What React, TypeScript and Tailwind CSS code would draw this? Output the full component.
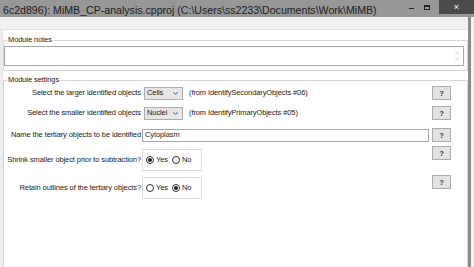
import { ChevronDown, ChevronUp } from "lucide-react";

function HelpButton() {
  return (
    <div className="w-[19px] h-[14px] bg-[#e3e3e3] border border-[#acacac] flex items-center justify-center text-[7px] font-bold text-[#333] leading-none">
      ?
    </div>
  );
}

function Select({ value }: { value: string }) {
  return (
    <div className="w-[39px] h-[13px] bg-[#e6e6e6] border border-[#adadad] flex items-center justify-between pl-[2px] pr-[3px]">
      <span>{value}</span>
      <ChevronDown size={7} strokeWidth={3} className="text-[#333]" />
    </div>
  );
}

function Radio({ checked }: { checked: boolean }) {
  return (
    <span className="w-[8px] h-[8px] rounded-full border border-[#333] bg-white flex items-center justify-center">
      {checked && <span className="w-[4px] h-[4px] rounded-full bg-[#222]" />}
    </span>
  );
}

function YesNo({ yes }: { yes: boolean }) {
  return (
    <div className="w-[60px] h-[22px] border border-[#dcdcdc] bg-white flex items-center gap-[4px] pl-[3px]">
      <span className="flex items-center gap-[2px]">
        <Radio checked={yes} />
        Yes
      </span>
      <span className="flex items-center gap-[2px]">
        <Radio checked={!yes} />
        No
      </span>
    </div>
  );
}

export default function App() {
  return (
    <div className="w-[474px] h-[267px] overflow-hidden bg-white flex flex-col font-['Liberation_Sans',Arial,sans-serif] text-[#1a1a1a]">
      {/* Title bar */}
      <div className="h-[20px] bg-[#979797] flex items-start">
        <div className="pl-[3px] pt-[3px] text-[10.6px] leading-[14px] text-[#1e1e1e] whitespace-nowrap">
          6c2d896): MiMB_CP-analysis.cpproj (C:\Users\ss2233\Documents\Work\MiMB)
        </div>
        <div className="ml-auto flex items-start">
          <div className="w-[16px] h-[14px] flex items-center justify-center">
            <div className="w-[5px] h-[1px] bg-[#222] mt-[3px]" />
          </div>
          <div className="w-[16px] h-[14px] flex items-center justify-center">
            <div className="w-[6px] h-[5px] border border-[#222] border-t-2" />
          </div>
          <div className="w-[35px] h-[14px] bg-[#4a4a4a] ml-[4px] flex items-center justify-center text-white text-[9px] leading-none">
            ×
          </div>
        </div>
      </div>

      <div className="flex-1 flex">
        <div className="w-[468px] flex flex-col">
          <div className="h-[13px] bg-[#f1f1f1] border-b border-[#e2e2e2]" />

          <div className="flex-1 border-l-[3px] border-[#ececec] text-[7.5px] leading-[10px] tracking-[-0.1px]">
            {/* Module notes */}
            <fieldset className="mt-[5px] border border-[#d7d7d7] pb-[4px]">
              <legend className="ml-[3px] px-[1px] leading-[10px]">Module notes</legend>
              <div className="mt-[1px] h-[20px] border border-[#a8a8a8] bg-white flex justify-end mr-[3px]">
                <div className="flex flex-col items-center justify-center pr-[3px] text-[#9a9a9a]">
                  <ChevronUp size={6} strokeWidth={2} />
                  <ChevronDown size={6} strokeWidth={2} />
                </div>
              </div>
            </fieldset>

            {/* Module settings */}
            <fieldset className="mt-[4px] border border-[#d7d7d7] h-[200px] pr-[16px]">
              <legend className="ml-[3px] px-[1px] leading-[10px]">Module settings</legend>

              <div className="mt-[1px] flex items-center h-[14px]">
                <div className="w-[137px] text-right whitespace-nowrap">Select the larger identified objects</div>
                <div className="ml-[3px]">
                  <Select value="Cells" />
                </div>
                <div className="ml-[6px]">(from IdentifySecondaryObjects #06)</div>
                <div className="ml-auto">
                  <HelpButton />
                </div>
              </div>

              <div className="mt-[6px] flex items-center h-[14px]">
                <div className="w-[137px] text-right whitespace-nowrap">Select the smaller identified objects</div>
                <div className="ml-[3px]">
                  <Select value="Nuclei" />
                </div>
                <div className="ml-[6px]">(from IdentifyPrimaryObjects #05)</div>
                <div className="ml-auto">
                  <HelpButton />
                </div>
              </div>

              <div className="mt-[8px] flex items-center h-[14px]">
                <div className="w-[137px] text-right whitespace-nowrap">Name the tertiary objects to be identified</div>
                <div className="ml-[1px] w-[287px] h-[13px] border border-[#a8a8a8] bg-white pl-[2px] flex items-center">
                  Cytoplasm
                </div>
                <div className="ml-auto">
                  <HelpButton />
                </div>
              </div>

              <div className="mt-[4px] flex items-start">
                <div className="mt-[3px] flex items-center">
                  <div className="w-[137px] text-right whitespace-nowrap">Shrink smaller object prior to subtraction?</div>
                  <div className="ml-[1px]">
                    <YesNo yes={true} />
                  </div>
                </div>
                <div className="ml-auto">
                  <HelpButton />
                </div>
              </div>

              <div className="mt-[4px] flex items-start">
                <div className="mt-[2px] flex items-center">
                  <div className="w-[137px] text-right whitespace-nowrap">Retain outlines of the tertiary objects?</div>
                  <div className="ml-[1px]">
                    <YesNo yes={false} />
                  </div>
                </div>
                <div className="ml-auto">
                  <HelpButton />
                </div>
              </div>
            </fieldset>
          </div>
        </div>
        <div className="w-[3px] bg-[#8c8c8c]" />
        <div className="flex-1 bg-[#f3f3f3]" />
      </div>
    </div>
  );
}
